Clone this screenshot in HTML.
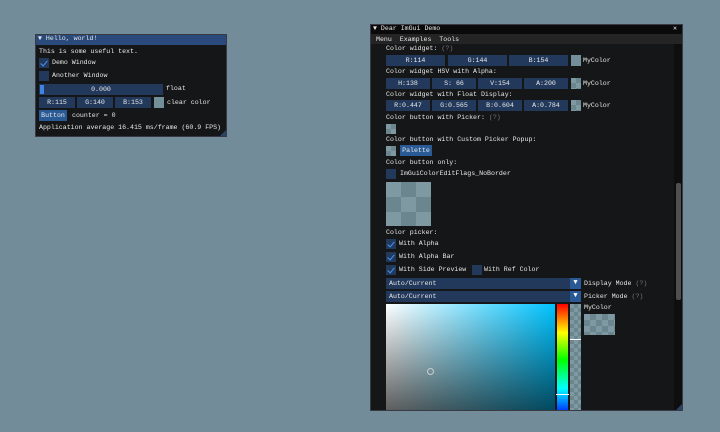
<!DOCTYPE html>
<html><head><meta charset="utf-8"><style>
*{margin:0;padding:0;box-sizing:border-box}
html,body{overflow:hidden}
body{width:720px;height:432px;background:#738c99;position:relative;overflow:hidden;font-family:"Liberation Mono",monospace;font-size:6.6px;color:#e8e8e8}
div{position:absolute}
.t{line-height:8px;white-space:pre}
.f{background:#23395c}
.c{text-align:center;line-height:11px}
.d{color:#777}
.cb{width:10px;height:10px;background:#23395c}
.ck::after{content:"";position:absolute;left:3px;top:1px;width:3px;height:6px;border:solid #4296fa;border-width:0 1.5px 1.5px 0;transform:rotate(40deg)}
.sw{background:#728f9a}
.chk{background-color:#7f99a3;background-image:linear-gradient(45deg,#6b868f 25%,transparent 25%,transparent 75%,#6b868f 75%),linear-gradient(45deg,#6b868f 25%,transparent 25%,transparent 75%,#6b868f 75%);background-size:10px 10px;background-position:0 0,5px 5px}
</style></head><body>

<!-- Hello window -->
<div style="left:35px;top:34px;width:192px;height:103px;background:#151617;border:1px solid #3a3a44">
 <div style="left:0;top:0;width:190px;height:10px;background:#294a7a"></div>
</div>
<div class="t" style="left:38px;top:35px">▼ Hello, world!</div>
<div class="t" style="left:39px;top:48px">This is some useful text.</div>
<div class="cb ck" style="left:39px;top:58px"></div><div class="t" style="left:52px;top:59px">Demo Window</div>
<div class="cb" style="left:39px;top:71px"></div><div class="t" style="left:52px;top:72px">Another Window</div>
<div class="f c" style="left:39px;top:84px;width:124px;height:11px">0.000</div>
<div style="left:40px;top:85px;width:4px;height:9px;background:#3d85e0"></div>
<div class="t" style="left:166px;top:85px">float</div>
<div class="f c" style="left:39px;top:97px;width:36px;height:11px">R:115</div>
<div class="f c" style="left:77px;top:97px;width:36px;height:11px">G:140</div>
<div class="f c" style="left:115px;top:97px;width:36px;height:11px">B:153</div>
<div class="sw" style="left:154px;top:97px;width:10px;height:11px"></div>
<div class="t" style="left:167px;top:99px">clear color</div>
<div class="c" style="left:39px;top:110px;width:28px;height:11px;background:#2a5a96">Button</div>
<div class="t" style="left:72px;top:112px">counter = 0</div>
<div class="t" style="left:39px;top:124px">Application average 16.415 ms/frame (60.9 FPS)</div>
<div style="left:220px;top:130px;width:0;height:0;border-left:6px solid transparent;border-bottom:6px solid #2a4466"></div>

<!-- Demo window -->
<div style="left:370px;top:24px;width:313px;height:387px;background:#151617;border:1px solid #3a3a44"></div>
<div style="left:371px;top:25px;width:311px;height:9px;background:#0a0a0a"></div>
<div class="t" style="left:373px;top:25px">▼ Dear ImGui Demo</div>
<div class="t" style="left:673px;top:25px">✕</div>
<div style="left:371px;top:34px;width:311px;height:10px;background:#242424"></div>
<div class="t" style="left:376px;top:36px">Menu  Examples  Tools</div>
<div style="left:674px;top:44px;width:8px;height:366px;background:#0e0e0e"></div>
<div style="left:676px;top:183px;width:5px;height:117px;background:#4f4f4f;border-radius:2px"></div>

<div class="t" style="left:386px;top:45px">Color widget: <span class="d">(?)</span></div>
<div class="f c" style="left:386px;top:55px;width:59px;height:11px">R:114</div>
<div class="f c" style="left:448px;top:55px;width:59px;height:11px">G:144</div>
<div class="f c" style="left:509px;top:55px;width:59px;height:11px">B:154</div>
<div class="sw" style="left:571px;top:55px;width:10px;height:11px"></div>
<div class="t" style="left:583px;top:57px">MyColor</div>

<div class="t" style="left:386px;top:68px">Color widget HSV with Alpha:</div>
<div class="f c" style="left:386px;top:78px;width:44px;height:11px">H:138</div>
<div class="f c" style="left:432px;top:78px;width:44px;height:11px">S: 66</div>
<div class="f c" style="left:478px;top:78px;width:44px;height:11px">V:154</div>
<div class="f c" style="left:524px;top:78px;width:44px;height:11px">A:200</div>
<div class="chk" style="left:571px;top:78px;width:10px;height:11px"></div>
<div class="t" style="left:583px;top:80px">MyColor</div>

<div class="t" style="left:386px;top:91px">Color widget with Float Display:</div>
<div class="f c" style="left:386px;top:100px;width:44px;height:11px">R:0.447</div>
<div class="f c" style="left:432px;top:100px;width:44px;height:11px">G:0.565</div>
<div class="f c" style="left:478px;top:100px;width:44px;height:11px">B:0.604</div>
<div class="f c" style="left:524px;top:100px;width:44px;height:11px">A:0.784</div>
<div class="chk" style="left:571px;top:100px;width:10px;height:11px"></div>
<div class="t" style="left:583px;top:102px">MyColor</div>

<div class="t" style="left:386px;top:114px">Color button with Picker: <span class="d">(?)</span></div>
<div class="chk" style="left:386px;top:124px;width:10px;height:10px"></div>
<div class="t" style="left:386px;top:136px">Color button with Custom Picker Popup:</div>
<div class="chk" style="left:386px;top:146px;width:10px;height:10px"></div>
<div class="c" style="left:400px;top:145px;width:32px;height:11px;background:#2a5a96">Palette</div>
<div class="t" style="left:386px;top:159px">Color button only:</div>
<div class="cb" style="left:386px;top:169px"></div>
<div class="t" style="left:400px;top:170px">ImGuiColorEditFlags_NoBorder</div>
<div class="chk" style="left:386px;top:182px;width:45px;height:44px;background-size:30px 30px;background-position:0 0,15px 15px"></div>
<div class="t" style="left:386px;top:229px">Color picker:</div>
<div class="cb ck" style="left:386px;top:239px"></div><div class="t" style="left:399px;top:240px">With Alpha</div>
<div class="cb ck" style="left:386px;top:252px"></div><div class="t" style="left:399px;top:253px">With Alpha Bar</div>
<div class="cb ck" style="left:386px;top:265px"></div><div class="t" style="left:399px;top:266px">With Side Preview</div>
<div class="cb" style="left:472px;top:265px"></div><div class="t" style="left:484px;top:266px">With Ref Color</div>

<div class="f" style="left:386px;top:278px;width:195px;height:11px"></div>
<div class="t" style="left:389px;top:280px">Auto/Current</div>
<div style="left:570px;top:278px;width:11px;height:11px;background:#2a5a96;color:#fff;text-align:center;line-height:11px;font-size:7px">▼</div>
<div class="t" style="left:584px;top:280px">Display Mode <span class="d">(?)</span></div>
<div class="f" style="left:386px;top:291px;width:195px;height:11px"></div>
<div class="t" style="left:389px;top:293px">Auto/Current</div>
<div style="left:570px;top:291px;width:11px;height:11px;background:#2a5a96;color:#fff;text-align:center;line-height:11px;font-size:7px">▼</div>
<div class="t" style="left:584px;top:293px">Picker Mode <span class="d">(?)</span></div>

<div style="left:386px;top:304px;width:169px;height:106px;background:linear-gradient(to bottom,rgba(0,0,0,0),#000) 0 0/169px 169px no-repeat,linear-gradient(to right,#fff,#00c3ff)"></div>
<div style="left:427px;top:368px;width:7px;height:7px;border:1px solid #ccc;border-radius:50%"></div>
<div style="left:557px;top:304px;width:11px;height:106px;background:linear-gradient(to bottom,#f00,#ff0 17%,#0f0 33%,#0ff 50%,#00f 67%,#f0f 83%,#f00) 0 0/11px 169px no-repeat"></div>
<div style="left:556px;top:394px;width:13px;height:1px;background:#fff"></div>
<div class="chk" style="left:570px;top:304px;width:11px;height:106px;background-size:8px 8px;background-position:0 0,4px 4px"></div>
<div style="left:570px;top:339px;width:11px;height:1px;background:#fff"></div>
<div class="t" style="left:584px;top:304px">MyColor</div>
<div class="chk" style="left:584px;top:314px;width:31px;height:21px;background-size:12px 12px;background-position:0 0,6px 6px"></div>
<div style="left:676px;top:404px;width:0;height:0;border-left:6px solid transparent;border-bottom:6px solid #2a4466"></div>
</body></html>
